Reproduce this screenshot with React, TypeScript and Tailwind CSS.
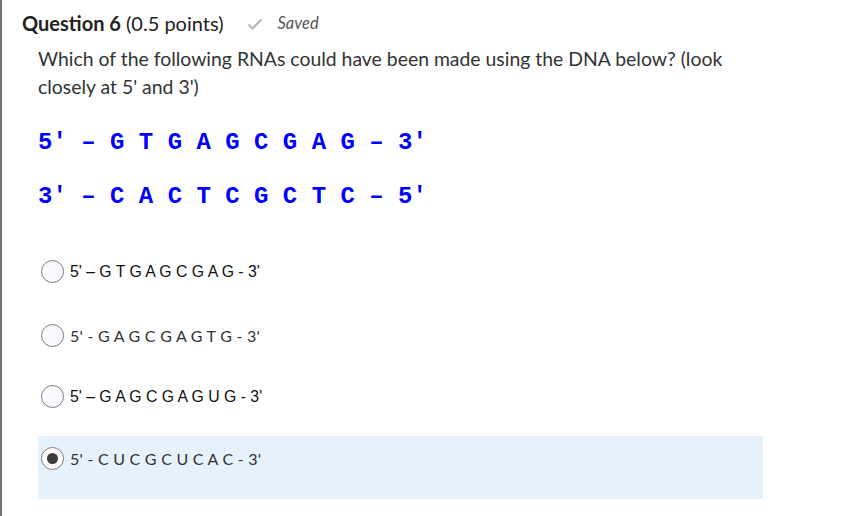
import React from 'react'

interface Option {
  label: string
  font: 'arial' | 'lato'
  checked?: boolean
  top: string
}

const options: Option[] = [
  { label: "5' \u2013 G T G A G C G A G - 3'", font: 'arial', top: 'mt-[40px]' },
  { label: "5' - G A G C G A G T G - 3'", font: 'lato', top: 'mt-[1px]' },
  { label: "5' \u2013 G A G C G A G U G - 3'", font: 'arial', top: 'mt-[-2px]' },
  { label: "5' - C U C G C U C A C - 3'", font: 'lato', checked: true, top: 'mt-[-1px]' },
]

function Radio({ checked }: { checked?: boolean }) {
  return (
    <span
      className={
        checked
          ? 'flex h-[23px] w-[23px] shrink-0 items-center justify-center rounded-full border border-[#7a7a7a] bg-white'
          : 'flex h-[23px] w-[23px] shrink-0 items-center justify-center rounded-full border border-[#7a7a7a] bg-[#f8faff]'
      }
    >
      {checked && <span className="h-[11px] w-[11px] rounded-full bg-[#3c3c3c]" />}
    </span>
  )
}

export default function App() {
  return (
    <div className="min-h-[516px] w-[868px] border-l-2 border-[#747474] bg-white font-['Lato',sans-serif]">
      <div className="flex items-center pl-[20px] pt-[11px]">
        <h2 className="text-[20px] leading-[24px] text-[#222]">
          <span className="font-bold">Question 6</span> (0.5 points)
        </h2>
        <svg width="16" height="12" viewBox="0 0 16 12" className="ml-[23px] mt-[1px]">
          <polyline points="1.5,6.5 5.5,10.5 14.5,1.5" fill="none" stroke="#b4b4b4" strokeWidth="2" />
        </svg>
        <span className="ml-[15px] text-[16.5px] italic leading-[24px] text-[#555]">Saved</span>
      </div>

      <div className="ml-[36px] w-[725px]">
        <p className="mt-[10px] text-[19.4px] leading-[28px] text-[#333]">
          Which of the following RNAs could have been made using the DNA below? (look closely at 5' and 3')
        </p>

        <div className="mt-[30px] whitespace-pre font-['Liberation_Mono',monospace] text-[24px] font-bold leading-[24px] text-[#0000ff]">
          <div>5' {'\u2013'} G T G A G C G A G {'\u2013'} 3'</div>
          <div className="mt-[30px]">3' {'\u2013'} C A C T C G C T C {'\u2013'} 5'</div>
        </div>

        <div className="flex flex-col">
          {options.map((opt) => (
            <div
              key={opt.label}
              className={
                (opt.checked ? 'bg-[#e7f1fc] ' : '') +
                'flex h-[63px] items-start gap-[6px] pl-[3px] pt-[11px] ' +
                opt.top
              }
            >
              <Radio checked={opt.checked} />
              <span
                className={
                  opt.font === 'arial'
                    ? "whitespace-pre font-['Liberation_Sans',sans-serif] text-[15.8px] leading-[23px] text-[#111]"
                    : 'whitespace-pre text-[16px] leading-[23px] tracking-[0.25px] text-[#333]'
                }
              >
                {opt.label}
              </span>
            </div>
          ))}
        </div>
      </div>
    </div>
  )
}
